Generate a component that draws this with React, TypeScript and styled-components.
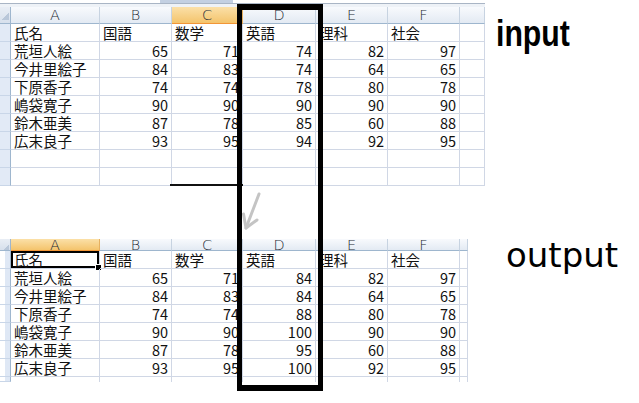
import React from 'react'
import styled, { createGlobalStyle, css } from 'styled-components'

const GlobalStyle = createGlobalStyle`
  html, body {
    margin: 0;
    padding: 0;
    background: #fff;
  }
  body {
    font-family: 'Liberation Sans', Arial, sans-serif;
  }
`

const COLS = [89, 72, 71, 73, 72, 72]
const LETTERS = ['A', 'B', 'C', 'D', 'E', 'F']
const TITLES = ['氏名', '国語', '数学', '英語', '理科', '社会']

type Row = [string, number, number, number, number, number]

const BASE: Row[] = [
  ['荒垣人絵', 65, 71, 74, 82, 97],
  ['今井里絵子', 84, 83, 74, 64, 65],
  ['下原香子', 74, 74, 78, 80, 78],
  ['嶋袋寛子', 90, 90, 90, 90, 90],
  ['鈴木亜美', 87, 78, 85, 60, 88],
  ['広末良子', 93, 95, 94, 92, 95],
]

const OUTPUT_D = [84, 84, 88, 100, 95, 100]

const Page = styled.div`
  position: relative;
  width: 639px;
  height: 403px;
  overflow: hidden;
  background: #fff;
`

const Section = styled.section<{ $gap: number }>`
  display: flex;
  align-items: flex-start;
  margin-top: ${({ $gap }) => $gap}px;
`

const Sheet = styled.div<{ $tail: number }>`
  display: grid;
  grid-template-columns: 11px ${COLS.map((c) => `${c}px`).join(' ')} ${({ $tail }) => $tail}px;
  font-family: 'Noto Sans CJK JP', 'Liberation Sans', sans-serif;
  font-size: 14.5px;
  color: #111;
`

const FrameStrip = styled.div`
  grid-column: 1 / -1;
  display: flex;
  height: 7px;
  background: linear-gradient(#fff 0 3px, #a9b5c5 3px 4px, #eef2f7 4px 7px);
`

const FrameTab = styled.div`
  margin-left: 160px;
  width: 73px;
  height: 3px;
  background: #c3d0e2;
`

const Corner = styled.div<{ $h: number }>`
  height: ${({ $h }) => $h}px;
  box-sizing: border-box;
  border-right: 1px solid #9eb6ce;
  border-bottom: 1px solid #9eb6ce;
  background:
    linear-gradient(135deg, transparent 0 55%, #b9c7d9 55% 100%) 2px 4px / 7px 9px no-repeat,
    linear-gradient(#e9eef5, #d7e0ec);
`

const ColHead = styled.div<{ $h: number; $active?: boolean }>`
  height: ${({ $h }) => $h}px;
  box-sizing: border-box;
  display: flex;
  align-items: center;
  justify-content: center;
  border-right: 1px solid #c7d3e1;
  border-bottom: 1px solid #9eb6ce;
  background: linear-gradient(#f8fafd, #e3eaf3);
  font-family: 'DejaVu Sans', 'Liberation Sans', sans-serif;
  font-weight: 200;
  font-size: 14.5px;
  line-height: 10px;
  color: #262c36;

  ${({ $active }) =>
    $active &&
    css`
      background: linear-gradient(#fbe0a8, #f4c46c);
      border-right-color: #e6b060;
      border-bottom-color: #f29536;
    `}
`

const RowHead = styled.div<{ $h: number; $inset?: boolean }>`
  height: ${({ $h }) => $h}px;
  box-sizing: border-box;
  border-right: 1px solid #9eb6ce;
  border-bottom: 1px solid #c9d6e8;
  background: ${({ $inset }) =>
    $inset ? 'linear-gradient(90deg, #fff 0 5px, #dfe8f5 5px)' : '#e2eaf6'};
`

const Cell = styled.div<{ $h: number; $num?: boolean; $selected?: boolean; $open?: boolean }>`
  position: relative;
  min-width: 0;
  height: ${({ $h }) => $h}px;
  box-sizing: border-box;
  display: flex;
  align-items: center;
  justify-content: ${({ $num }) => ($num ? 'flex-end' : 'flex-start')};
  padding: 0 3px;
  white-space: nowrap;
  line-height: 16px;
  border-right: 1px solid #d0d7e5;
  border-bottom: ${({ $open }) => ($open ? 'none' : '1px solid #d0d7e5')};

  ${({ $selected }) =>
    $selected &&
    css`
      box-shadow: inset 0 0 0 2px #000;

      &::after {
        content: '';
        position: absolute;
        right: -3px;
        bottom: -3px;
        width: 5px;
        height: 5px;
        background: #000;
        border: 1px solid #fff;
      }
    `}
`

const Label = styled.div<{ $bold?: boolean }>`
  white-space: nowrap;
  color: #000;
  transform-origin: left top;

  ${({ $bold }) =>
    $bold
      ? css`
          margin: 16px 0 0 11px;
          font-family: 'Liberation Sans', Arial, sans-serif;
          font-weight: 700;
          font-size: 36px;
          line-height: 36px;
          transform: scaleX(0.84);
        `
      : css`
          margin: -1px 0 0 38px;
          font-family: 'DejaVu Sans', 'Liberation Sans', sans-serif;
          font-size: 34px;
          line-height: 34px;
        `}
`

const ColumnFrame = styled.div`
  position: absolute;
  left: 237px;
  top: 4px;
  width: 86px;
  height: 387px;
  box-sizing: border-box;
  border: solid #000;
  border-width: 6px 5px;
  pointer-events: none;
`

const StrayLine = styled.div`
  position: absolute;
  left: 170px;
  top: 184px;
  width: 73px;
  height: 2px;
  background: #111;
`

const Arrow = styled.svg`
  position: absolute;
  left: 238px;
  top: 188px;
  width: 26px;
  height: 46px;
`

interface SheetProps {
  active: number
  dValues: number[]
  headH: number
  blankRows: number
  tailRow: number
  tail: number
  frame?: boolean
  selectFirst?: boolean
  inset?: boolean
}

const SpreadSheet: React.FC<SheetProps> = ({
  active,
  dValues,
  headH,
  blankRows,
  tailRow,
  tail,
  frame,
  selectFirst,
  inset,
}) => {
  const rows = BASE.map((r, i) => [r[0], r[1], r[2], dValues[i], r[4], r[5]] as Row)
  const blanks = Array.from({ length: blankRows })

  return (
    <Sheet $tail={tail}>
      {frame && (
        <FrameStrip>
          <FrameTab />
        </FrameStrip>
      )}

      <Corner $h={headH} />
      {LETTERS.map((l, i) => (
        <ColHead key={l} $h={headH} $active={i === active}>
          {l}
        </ColHead>
      ))}
      <ColHead $h={headH} />

      <RowHead $h={18} $inset={inset} />
      {TITLES.map((t, i) => (
        <Cell key={t} $h={18} $selected={selectFirst && i === 0}>
          {t}
        </Cell>
      ))}
      <Cell $h={18} />

      {rows.map((r) => (
        <React.Fragment key={r[0]}>
          <RowHead $h={18} $inset={inset} />
          {r.map((v, i) => (
            <Cell key={i} $h={18} $num={i > 0}>
              {v}
            </Cell>
          ))}
          <Cell $h={18} />
        </React.Fragment>
      ))}

      {blanks.map((_, b) => (
        <React.Fragment key={`b${b}`}>
          <RowHead $h={18} $inset={inset} />
          {LETTERS.map((l) => (
            <Cell key={l} $h={18} />
          ))}
          <Cell $h={18} />
        </React.Fragment>
      ))}

      {tailRow > 0 && (
        <>
          <RowHead $h={tailRow} $inset={inset} />
          {LETTERS.map((l) => (
            <Cell key={l} $h={tailRow} $open />
          ))}
          <Cell $h={tailRow} $open />
        </>
      )}
    </Sheet>
  )
}

const App: React.FC = () => {
  return (
    <Page>
      <GlobalStyle />
      <Section $gap={0}>
        <SpreadSheet
          active={2}
          dValues={BASE.map((r) => r[3])}
          headH={17}
          blankRows={2}
          tailRow={0}
          tail={25}
          frame
        />
        <Label $bold>input</Label>
      </Section>

      <Section $gap={53}>
        <SpreadSheet
          active={0}
          dValues={OUTPUT_D}
          headH={12}
          blankRows={0}
          tailRow={5}
          tail={8}
          selectFirst
          inset
        />
        <Label>output</Label>
      </Section>

      <StrayLine />
      <Arrow viewBox="0 0 26 46">
        <g fill="none" stroke="#c4c4c4" strokeWidth={3} strokeLinecap="round" strokeLinejoin="round">
          <path d="M21 6 L8 40" />
          <path d="M5.5 26 L8 40 L19 32" />
        </g>
      </Arrow>
      <ColumnFrame />
    </Page>
  )
}

export default App
